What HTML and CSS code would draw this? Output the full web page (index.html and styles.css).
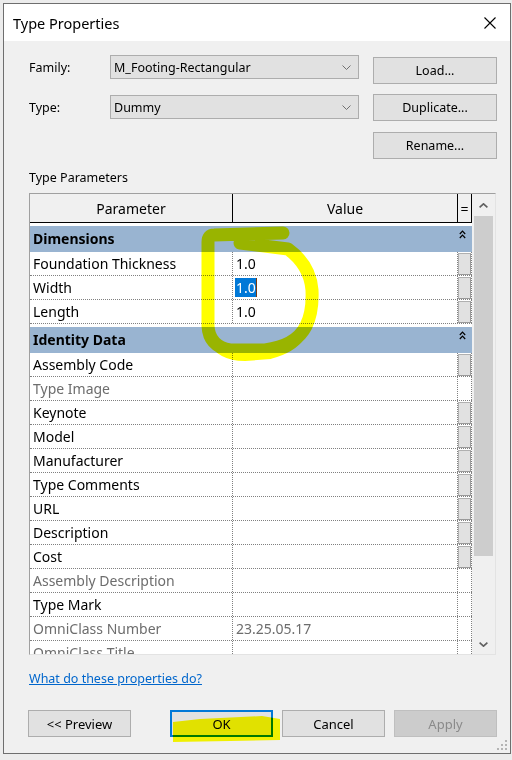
FILE: index.html
```html
<!DOCTYPE html>
<html>
<head>
<meta charset="utf-8">
<title>Type Properties</title>
<link rel="stylesheet" href="styles.css">
</head>
<body>
<div class="window">
  <div class="titlebar">
    <span class="title">Type Properties</span>
    <svg class="close" width="12" height="12" viewBox="0 0 12 12"><path d="M0.5 0.5L11.5 11.5M11.5 0.5L0.5 11.5" stroke="#000" stroke-width="1.1" fill="none"/></svg>
  </div>
  <div class="content">
    <div class="top">
      <div class="fields">
        <div class="field">
          <span class="field-label">Family:</span>
          <div class="combo"><span>M_Footing-Rectangular</span><svg class="chev" width="9" height="5" viewBox="0 0 9 5"><path d="M0.5 0.5L4.5 4.5L8.5 0.5" stroke="#707070" stroke-width="1" fill="none"/></svg></div>
        </div>
        <div class="field">
          <span class="field-label">Type:</span>
          <div class="combo"><span>Dummy</span><svg class="chev" width="9" height="5" viewBox="0 0 9 5"><path d="M0.5 0.5L4.5 4.5L8.5 0.5" stroke="#707070" stroke-width="1" fill="none"/></svg></div>
        </div>
      </div>
      <div class="side-buttons">
        <div class="btn">Load...</div>
        <div class="btn">Duplicate...</div>
        <div class="btn">Rename...</div>
      </div>
    </div>
    <div class="section-label">Type Parameters</div>
    <div class="table">
      <div class="grid">
        <div class="thead">
          <div class="th param">Parameter</div>
          <div class="th value">Value</div>
          <div class="th eq">=</div>
        </div>
        <div class="group"><span>Dimensions</span><svg class="gchev" width="7" height="9" viewBox="0 0 7 9"><path d="M0.8 4L3.5 1.2L6.2 4M0.8 8L3.5 5.2L6.2 8" stroke="#000" stroke-width="1.2" fill="none"/></svg></div>
        <div class="row"><div class="cell param">Foundation Thickness</div><div class="cell value">1.0</div><div class="cell edit"><span class="editbtn"></span></div></div>
        <div class="row"><div class="cell param">Width</div><div class="cell value"><span class="sel">1.0</span></div><div class="cell edit"><span class="editbtn"></span></div></div>
        <div class="row"><div class="cell param">Length</div><div class="cell value">1.0</div><div class="cell edit"><span class="editbtn"></span></div></div>
        <div class="group"><span>Identity Data</span><svg class="gchev" width="7" height="9" viewBox="0 0 7 9"><path d="M0.8 4L3.5 1.2L6.2 4M0.8 8L3.5 5.2L6.2 8" stroke="#000" stroke-width="1.2" fill="none"/></svg></div>
        <div class="row"><div class="cell param">Assembly Code</div><div class="cell value"></div><div class="cell edit"><span class="editbtn"></span></div></div>
        <div class="row"><div class="cell param dim">Type Image</div><div class="cell value"></div><div class="cell edit"></div></div>
        <div class="row"><div class="cell param">Keynote</div><div class="cell value"></div><div class="cell edit"><span class="editbtn"></span></div></div>
        <div class="row"><div class="cell param">Model</div><div class="cell value"></div><div class="cell edit"><span class="editbtn"></span></div></div>
        <div class="row"><div class="cell param">Manufacturer</div><div class="cell value"></div><div class="cell edit"><span class="editbtn"></span></div></div>
        <div class="row"><div class="cell param">Type Comments</div><div class="cell value"></div><div class="cell edit"><span class="editbtn"></span></div></div>
        <div class="row"><div class="cell param">URL</div><div class="cell value"></div><div class="cell edit"><span class="editbtn"></span></div></div>
        <div class="row"><div class="cell param">Description</div><div class="cell value"></div><div class="cell edit"><span class="editbtn"></span></div></div>
        <div class="row"><div class="cell param">Cost</div><div class="cell value"></div><div class="cell edit"><span class="editbtn"></span></div></div>
        <div class="row"><div class="cell param dim">Assembly Description</div><div class="cell value"></div><div class="cell edit"></div></div>
        <div class="row"><div class="cell param">Type Mark</div><div class="cell value"></div><div class="cell edit"></div></div>
        <div class="row"><div class="cell param dim">OmniClass Number</div><div class="cell value dim">23.25.05.17</div><div class="cell edit"></div></div>
        <div class="row"><div class="cell param dim">OmniClass Title</div><div class="cell value"></div><div class="cell edit"></div></div>
      </div>
      <div class="scrollbar">
        <div class="sb-btn sb-up"><svg width="9" height="5" viewBox="0 0 9 5"><path d="M0.6 4.4L4.5 0.8L8.4 4.4" stroke="#606060" stroke-width="1.6" fill="none"/></svg></div>
        <div class="sb-thumb"></div>
        <div class="sb-space"></div>
        <div class="sb-btn sb-down"><svg width="9" height="5" viewBox="0 0 9 5"><path d="M0.6 0.6L4.5 4.2L8.4 0.6" stroke="#606060" stroke-width="1.6" fill="none"/></svg></div>
      </div>
    </div>
    <a class="help" href="#">What do these properties do?</a>
    <div class="bottom-buttons">
      <div class="btn wide preview">&lt;&lt; Preview</div>
      <div class="actions">
        <div class="btn wide ok">OK</div>
        <div class="btn wide">Cancel</div>
        <div class="btn wide disabled">Apply</div>
      </div>
    </div>
  </div>
  <svg class="grip" width="11" height="11" viewBox="0 0 11 11"><g fill="#b4b4b4"><rect x="8" y="0" width="2" height="2"/><rect x="4" y="4" width="2" height="2"/><rect x="8" y="4" width="2" height="2"/><rect x="0" y="8" width="2" height="2"/><rect x="4" y="8" width="2" height="2"/><rect x="8" y="8" width="2" height="2"/></g></svg>
</div>
<svg class="marker" width="512" height="760" viewBox="0 0 512 760">
  <path d="M283 233L214 235Q208 235 208 242L208 326Q209 346 230 350L265 350Q296 346 306 326Q313 312 312 290Q310 265 288 249L240 243" stroke="#ffff00" stroke-width="13" fill="none" stroke-linecap="round" stroke-linejoin="round"/>
  <path d="M212 338Q220 356 245 356L270 354Q292 348 300 336" stroke="#ffff00" stroke-width="10" fill="none" stroke-linecap="round"/>
  <polygon points="173,722 200,719 262,716 280,719 280,740 230,741 173,742" fill="#ffff00"/>
</svg>
</body>
</html>
```

FILE: styles.css
```css
* { box-sizing: border-box; }
html, body { margin: 0; padding: 0; }
body {
  width: 512px;
  height: 760px;
  overflow: hidden;
  position: relative;
  background: #ececec;
  font-family: "Noto Sans", "Segoe UI", sans-serif;
  color: #000;
}
.window {
  position: relative;
  margin: 3px 0 0 3px;
  width: 508px;
  height: 751px;
  border: 1px solid #6e6e6e;
  background: #f0f0f0;
  display: flex;
  flex-direction: column;
}
.titlebar {
  flex: none;
  height: 37px;
  background: #fff;
  display: flex;
  align-items: center;
  justify-content: space-between;
  padding: 0 14px 0 9px;
}
.title { font-size: 14.5px; }
.close { display: block; margin-top: 1px; }
.content {
  display: flex;
  flex-direction: column;
  padding: 0 13px 0 25px;
}
.top {
  display: flex;
  justify-content: space-between;
  padding-top: 14px;
}
.fields { display: flex; flex-direction: column; gap: 16px; }
.field { display: flex; align-items: center; height: 24px; }
.field-label { width: 81px; font-size: 12.5px; }
.combo {
  width: 249px;
  height: 24px;
  border: 1px solid #adadad;
  background: #e1e1e1;
  display: flex;
  align-items: center;
  justify-content: space-between;
  padding: 0 7px 0 3px;
  font-size: 12.5px;
}
.chev { display: block; }
.side-buttons { display: flex; flex-direction: column; gap: 10px; padding-top: 2px; }
.btn {
  width: 124px;
  height: 27px;
  border: 1px solid #adadad;
  background: #e1e1e1;
  font-size: 12.5px;
  display: flex;
  align-items: center;
  justify-content: center;
}
.side-buttons .btn:last-child { margin-top: 1px; }
.section-label { margin-top: 11px; font-size: 12.5px; line-height: 16px; }
.table {
  margin-top: 7px;
  width: 467px;
  height: 462px;
  display: flex;
  background: #fff;
  border-top: 1px solid #a0a0a0;
  border-left: 1px solid #a0a0a0;
  border-right: 1px solid #e3e3e3;
  border-bottom: 1px solid #e3e3e3;
}
.grid {
  width: 442px;
  display: flex;
  flex-direction: column;
  overflow: hidden;
}
.thead {
  flex: none;
  display: flex;
  height: 29px;
  border-bottom: 1px solid #000;
  background: #f0f0f0;
}
.th {
  display: flex;
  align-items: center;
  justify-content: center;
  font-size: 14px;
  border-right: 1px solid #000;
}
.th.param, .cell.param { width: 203px; }
.th.value, .cell.value { width: 225px; }
.th.eq, .cell.edit { width: 14px; }
.group {
  flex: none;
  height: 29px;
  border-top: 3px solid #fff;
  background: #99b4d1;
  display: flex;
  align-items: center;
  justify-content: space-between;
  padding: 0 6px 2px 3px;
  font-size: 14px;
  font-weight: bold;
}
.gchev { display: block; align-self: flex-start; margin-top: 4px; }
.row {
  flex: none;
  display: flex;
  height: 24px;
  border-bottom: 1px dotted #808080;
}
.cell {
  display: flex;
  align-items: center;
  padding: 0 0 1px 3px;
  font-size: 14px;
  border-right: 1px dotted #808080;
  white-space: nowrap;
}
.cell.dim { color: #6d6d6d; }
.cell.edit { padding: 1px 0 0 0; align-items: flex-start; }
.editbtn {
  display: block;
  width: 13px;
  height: 22px;
  background: #e1e1e1;
  border: 1px solid #b0b0b0;
  border-right-color: #9a9a9a;
  border-bottom-color: #9a9a9a;
}
.sel {
  display: inline-block;
  background: #0078d7;
  color: #fff;
  line-height: 19px;
  margin-left: -1px;
  padding-left: 1px;
  border-right: 1px solid #7a3a10;
}
.scrollbar {
  width: 23px;
  background: #f0f0f0;
  display: flex;
  flex-direction: column;
}
.sb-btn { display: flex; align-items: center; justify-content: center; flex: none; }
.sb-btn svg { display: block; }
.sb-up { height: 22px; }
.sb-down { height: 20px; }
.sb-thumb { flex: none; margin-left: 2px; width: 19px; height: 340px; background: #cdcdcd; }
.sb-space { flex: 1; }
.help {
  margin-top: 15px;
  font-size: 12.5px;
  line-height: 18px;
  color: #0066cc;
  text-decoration: underline;
  align-self: flex-start;
}
.bottom-buttons {
  margin-top: 22px;
  display: flex;
  justify-content: space-between;
}
.actions { display: flex; gap: 9px; }
.btn.wide { width: 103px; font-size: 13px; }
.btn.preview { margin-left: -1px; }
.btn.ok { border: 2px solid #0078d7; }
.btn.disabled { background: #cccccc; border-color: #bfbfbf; color: #8a8a8a; }
.grip { position: absolute; left: 493px; top: 736px; display: block; }
.marker {
  position: absolute;
  left: 0;
  top: 0;
  pointer-events: none;
  mix-blend-mode: multiply;
}
```
